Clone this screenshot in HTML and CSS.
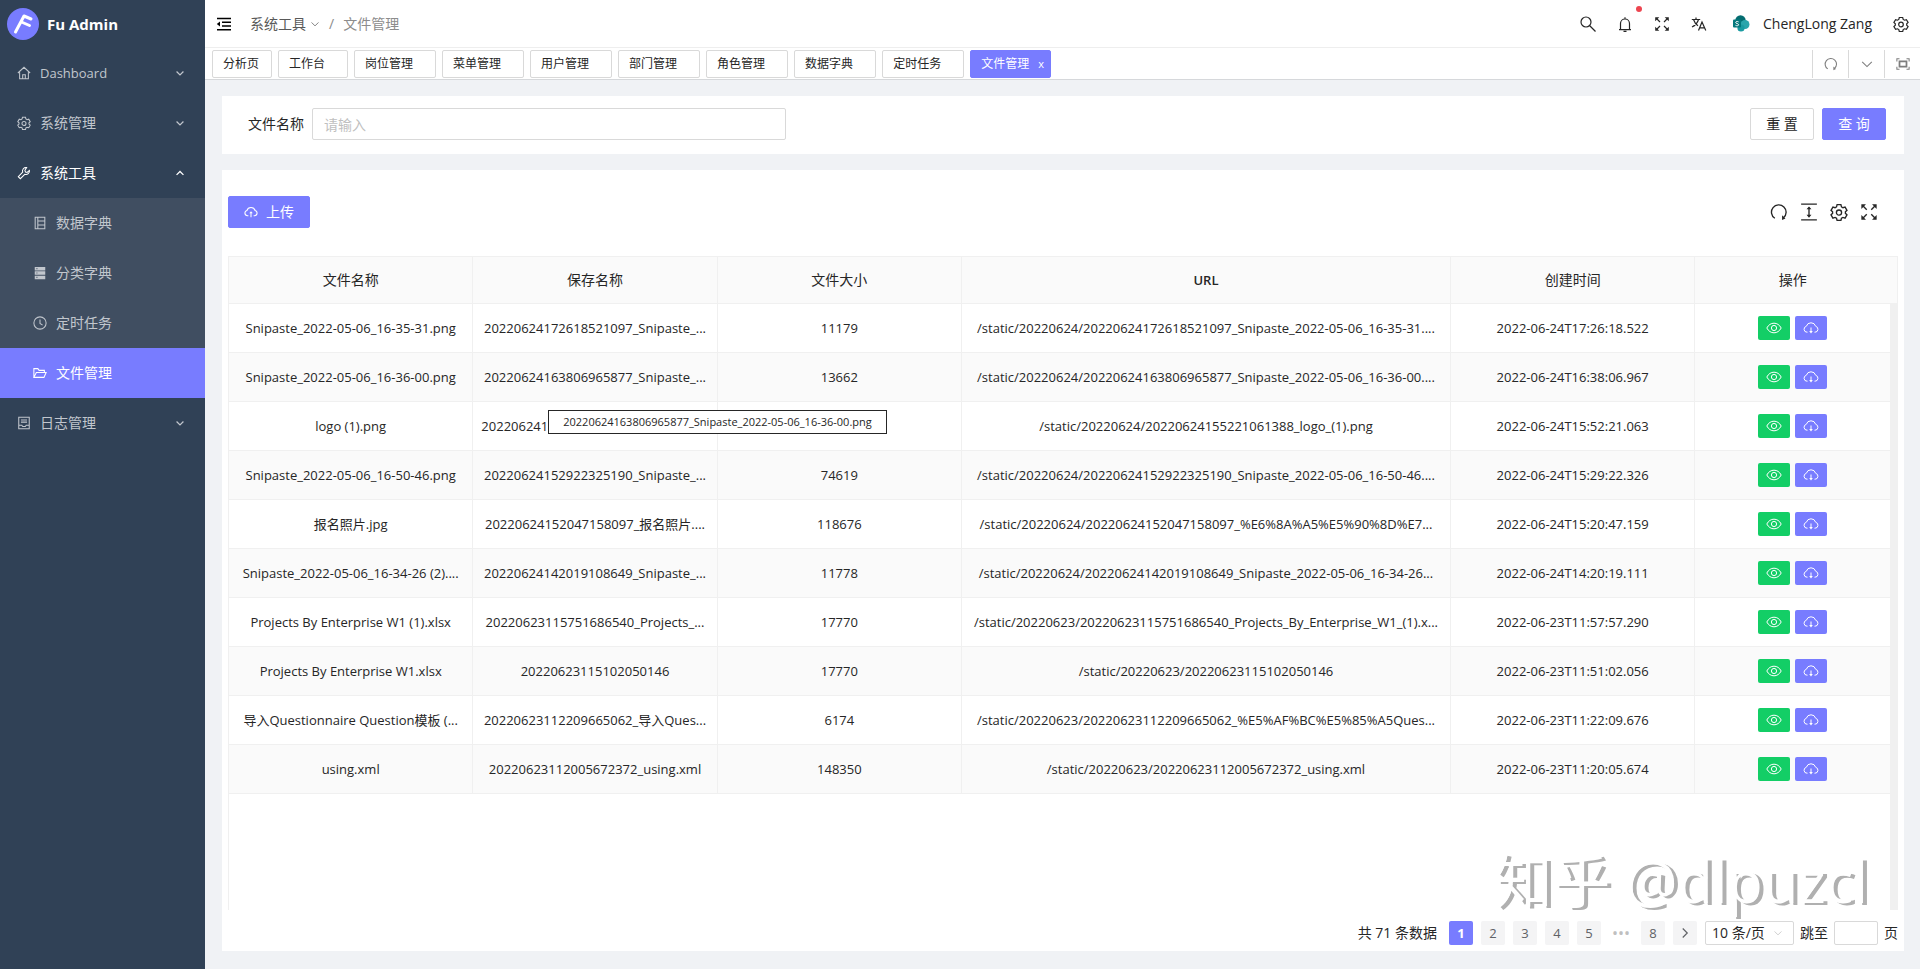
FILE: index.html
```html
<!DOCTYPE html>
<html lang="zh">
<head>
    <meta charset="UTF-8">
    <meta name="viewport" content="width=device-width, initial-scale=1.0">
    <title>文件管理 - Fu Admin</title>
    <link rel="stylesheet" href="styles.css">
</head>
<body>

    <!-- shared icons -->
    <svg class="sprite" xmlns="http://www.w3.org/2000/svg">
        <symbol id="i-down" viewBox="0 0 16 16"><path d="M2.500 5.500 8 11l5.500-5.500"/></symbol>
        <symbol id="i-up" viewBox="0 0 16 16"><path d="M2.500 11 8 5.500 13.500 11"/></symbol>
        <symbol id="i-gear" viewBox="0 0 16 16"><path d="M6.300 1.500h3.400l.5 1.900 1.300.8 1.900-.6 1.700 2.900-1.400 1.300v1.400l1.400 1.300-1.700 2.900-1.900-.6-1.300.8-.5 1.900H6.300l-.5-1.900-1.300-.8-1.900.6L.9 10.500l1.400-1.300V7.800L.9 6.500l1.700-2.900 1.900.6 1.300-.8z"/><circle cx="8" cy="8.500" r="2.300"/></symbol>
        <symbol id="i-full" viewBox="0 0 16 16"><path d="M10 6 13.500 2.500M6 6 2.500 2.500M6 10l-3.500 3.500M10 10l3.500 3.500"/><path class="solid" d="M10.700 1.200h4.100v4.100zM5.300 1.200H1.200v4.100zM1.200 10.700v4.100h4.100zM14.800 10.700v4.100h-4.100z"/></symbol>
        <symbol id="i-reload" viewBox="0 0 16 16"><path d="M4.300 13.600A6.500 6.500 0 1 1 12 13.100"/><path class="solid" d="M10.700 10.800v4.200l3-1.200z"/></symbol>
        <symbol id="i-eye" viewBox="0 0 16 16"><path d="M.8 8C2.500 4.800 5 3.200 8 3.200s5.500 1.600 7.200 4.800c-1.700 3.200-4.200 4.800-7.200 4.800S2.500 11.200.8 8z"/><circle cx="8" cy="8" r="2.600"/></symbol>
        <symbol id="i-cloud-down" viewBox="0 0 16 16"><path d="M4.500 12.200H4A3 3 0 0 1 3.300 6.300a4.900 4.900 0 0 1 9.400 0A3 3 0 0 1 12 12.200h-.5M8 7.500v4.500"/><path class="solid" d="M6.200 11h3.600L8 13.500z"/></symbol>
        <symbol id="i-cloud-up" viewBox="0 0 16 16"><path d="M5 12.200H4A3 3 0 0 1 3.300 6.300a4.900 4.900 0 0 1 9.400 0A3 3 0 0 1 12 12.200h-1M8 14V9"/><path class="solid" d="M6 9.500h4L8 7z"/></symbol>
    </svg>

    <aside class="sidebar">
        <a href="#" class="logo">
            <svg viewBox="0 0 32 32"><circle cx="16" cy="16" r="16" fill="#787cff"/><path d="M24 11 17 8 8.500 24M22.500 17.500 14.500 14" fill="none" stroke="#fff" stroke-width="3" stroke-linecap="round" stroke-linejoin="round"/></svg>
            <span>Fu Admin</span>
        </a>
        <nav>
            <a href="#" class="menu-item">
                <svg class="icon" viewBox="0 0 16 16"><path d="M1 8 8 1.500 15 8M3 7v7.500h10V7M6.500 14.500V10h3v4.500"/></svg>
                <span class="latin">Dashboard</span>
                <svg class="icon arrow"><use href="#i-down"/></svg>
            </a>
            <a href="#" class="menu-item">
                <svg class="icon"><use href="#i-gear"/></svg>
                <span>系统管理</span>
                <svg class="icon arrow"><use href="#i-down"/></svg>
            </a>
            <a href="#" class="menu-item open">
                <svg class="icon" viewBox="0 0 16 16"><path d="M11 1.800a4 4 0 0 0-4.500 5.300L1.500 12.200 3.800 14.500l5.100-5A4 4 0 0 0 14.200 5L11.500 7.300 9.700 6.800 9 4.800z"/></svg>
                <span>系统工具</span>
                <svg class="icon arrow"><use href="#i-up"/></svg>
            </a>
            <div class="submenu">
                <a href="#" class="menu-item">
                    <svg class="icon" viewBox="0 0 16 16"><path d="M2.500 1.500h11v13h-11zM5.500 1.500v13M5.500 5.800h8M5.500 10.200h8"/></svg>
                    <span>数据字典</span>
                </a>
                <a href="#" class="menu-item">
                    <svg class="icon" viewBox="0 0 16 16"><path class="solid" d="M2 1h12v4H2zM2 6h12v4H2zM2 11h12v4H2z"/><path class="dots" d="M4 3h1M4 8h1M4 13h1"/></svg>
                    <span>分类字典</span>
                </a>
                <a href="#" class="menu-item">
                    <svg class="icon" viewBox="0 0 16 16"><circle cx="8" cy="8" r="7"/><path d="M8 4v4.500l3 2"/></svg>
                    <span>定时任务</span>
                </a>
                <a href="#" class="menu-item active">
                    <svg class="icon" viewBox="0 0 16 16"><path d="M1 13V3h4.500l1.500 2h6v2.500M1 13l2.800-5.500H15L12.500 13z"/></svg>
                    <span>文件管理</span>
                </a>
            </div>
            <a href="#" class="menu-item">
                <svg class="icon" viewBox="0 0 16 16"><path d="M2 1.500h12v13H2zM4.500 4.500h7M4.500 7h7M2 10.500h3.500l1 1.500h3l1-1.500H14"/></svg>
                <span>日志管理</span>
                <svg class="icon arrow"><use href="#i-down"/></svg>
            </a>
        </nav>
    </aside>

    <div class="main">
        <header class="header">
            <svg class="icon fold" viewBox="0 0 16 16"><path d="M1 2.500h14M6 6.300h9M6 10h9M1 13.700h14"/><path class="solid" d="M4 5.500v5L.8 8z"/></svg>
            <div class="breadcrumb">
                <a href="#">系统工具 <svg class="icon"><use href="#i-down"/></svg></a>
                <span>/</span>
                <span>文件管理</span>
            </div>
            <div class="tools">
                <svg class="icon" viewBox="0 0 16 16"><circle cx="6" cy="6" r="5"/><path d="m9.500 9.500 6 6"/></svg>
                <span class="bell">
                    <svg class="icon" viewBox="0 0 16 16"><path d="M2 13.700h12M3.500 13.500V7.500a4.500 4.500 0 0 1 9 0v6M8 3V1.200M6.500 15.300h3"/></svg>
                </span>
                <svg class="icon"><use href="#i-full"/></svg>
                <svg class="icon" viewBox="0 0 16 16"><path d="M.8 3.500h8.400M5 1.500v2M7.500 3.500C6.500 7 4 9.500 1 11M2.500 3.500C3.500 6.500 5 8.500 7 9.800M7.500 14.500l3.500-8.500 3.800 8.500M8.800 11.800h4.500"/></svg>
                <svg class="avatar" viewBox="0 0 18 18"><circle cx="8.500" cy="5.500" r="5.200" fill="#036c70"/><circle cx="13" cy="9.500" r="4.500" fill="#2aa5ab"/><circle cx="9" cy="13" r="3.600" fill="#1a9ba1"/><rect x="1" y="4.500" width="8" height="8" rx="1" fill="#03787c"/><path d="M6.600 6.900C5.500 6.200 3.700 6.400 3.700 7.500c0 1.300 2.900.8 2.900 2.200 0 1.200-2 1.300-3.100.6" fill="none" stroke="#fff"/></svg>
                <span class="user">ChengLong Zang</span>
                <svg class="icon"><use href="#i-gear"/></svg>
            </div>
        </header>

        <div class="tabs">
            <a href="#" class="tab fixed">分析页</a>
            <a href="#" class="tab">工作台</a>
            <a href="#" class="tab">岗位管理</a>
            <a href="#" class="tab">菜单管理</a>
            <a href="#" class="tab">用户管理</a>
            <a href="#" class="tab">部门管理</a>
            <a href="#" class="tab">角色管理</a>
            <a href="#" class="tab">数据字典</a>
            <a href="#" class="tab">定时任务</a>
            <a href="#" class="tab active">文件管理<span class="close">x</span></a>
            <div class="tab-tools">
                <button type="button" aria-label="刷新"><svg class="icon"><use href="#i-reload"/></svg></button>
                <button type="button" aria-label="更多"><svg class="icon"><use href="#i-down"/></svg></button>
                <button type="button" aria-label="全屏"><svg class="icon" viewBox="0 0 16 16"><path d="M1 5V2h3M12 2h3v3M15 11v3h-3M4 14H1v-3"/><path class="bold" d="M4 5h8v6H4z"/></svg></button>
            </div>
        </div>

        <main class="content">
            <form class="card search">
                <label for="fileName">文件名称</label>
                <input type="text" id="fileName" placeholder="请输入">
                <button type="reset" class="btn">重 置</button>
                <button type="button" class="btn primary">查 询</button>
            </form>

            <section class="card list">
                <div class="toolbar">
                    <button type="button" class="btn primary upload"><svg class="icon"><use href="#i-cloud-up"/></svg>上传</button>
                    <div class="toolbar-icons">
                        <svg class="icon"><use href="#i-reload"/></svg>
                        <svg class="icon" viewBox="0 0 16 16"><path d="M1 1h14M1 15h14M8 4v8"/><path class="solid" d="M5.800 5.500h4.400L8 3zM5.800 10.500h4.400L8 13z"/></svg>
                        <svg class="icon"><use href="#i-gear"/></svg>
                        <svg class="icon"><use href="#i-full"/></svg>
                    </div>
                </div>

                <div class="table-wrap">
                    <table>
                        <colgroup>
                            <col class="c-name"><col class="c-name"><col class="c-name"><col class="c-url"><col class="c-name"><col><col class="c-bar">
                        </colgroup>
                        <thead>
                            <tr>
                                <th>文件名称</th>
                                <th>保存名称</th>
                                <th>文件大小</th>
                                <th class="latin">URL</th>
                                <th>创建时间</th>
                                <th class="actions">操作</th>
                                <td class="bar-head"></td>
                            </tr>
                        </thead>
                        <tbody id="rows"></tbody>
                    </table>
                    <div class="table-rest"></div>
                    <div class="tooltip" role="tooltip">20220624163806965877_Snipaste_2022-05-06_16-36-00.png</div>
                </div>

                <div class="pagination">
                    <span class="total">共 71 条数据</span>
                    <button type="button" class="page active">1</button>
                    <button type="button" class="page">2</button>
                    <button type="button" class="page">3</button>
                    <button type="button" class="page">4</button>
                    <button type="button" class="page">5</button>
                    <span class="more">•••</span>
                    <button type="button" class="page">8</button>
                    <button type="button" class="page" aria-label="下一页"><svg class="icon" viewBox="0 0 16 16"><path d="m5 2 6 6-6 6"/></svg></button>
                    <div class="page-end">
                        <div class="size">
                            <select aria-label="每页条数"><option>10 条/页</option></select>
                            <svg class="icon"><use href="#i-down"/></svg>
                        </div>
                        <label for="jump">跳至</label>
                        <input type="text" id="jump">
                        <span>页</span>
                    </div>
                </div>

                <div class="watermark">知乎 @dlpuzcl</div>
            </section>
        </main>
    </div>

    <script>
        const files = [
            ["Snipaste_2022-05-06_16-35-31.png", "20220624172618521097_Snipaste_...", "11179", "/static/20220624/20220624172618521097_Snipaste_2022-05-06_16-35-31....", "2022-06-24T17:26:18.522"],
            ["Snipaste_2022-05-06_16-36-00.png", "20220624163806965877_Snipaste_...", "13662", "/static/20220624/20220624163806965877_Snipaste_2022-05-06_16-36-00....", "2022-06-24T16:38:06.967"],
            ["logo (1).png", "20220624155221061388_logo_(1).png", "17770", "/static/20220624/20220624155221061388_logo_(1).png", "2022-06-24T15:52:21.063"],
            ["Snipaste_2022-05-06_16-50-46.png", "20220624152922325190_Snipaste_...", "74619", "/static/20220624/20220624152922325190_Snipaste_2022-05-06_16-50-46....", "2022-06-24T15:29:22.326"],
            ["报名照片.jpg", "20220624152047158097_报名照片....", "118676", "/static/20220624/20220624152047158097_%E6%8A%A5%E5%90%8D%E7...", "2022-06-24T15:20:47.159"],
            ["Snipaste_2022-05-06_16-34-26 (2)....", "20220624142019108649_Snipaste_...", "11778", "/static/20220624/20220624142019108649_Snipaste_2022-05-06_16-34-26...", "2022-06-24T14:20:19.111"],
            ["Projects By Enterprise W1 (1).xlsx", "20220623115751686540_Projects_...", "17770", "/static/20220623/20220623115751686540_Projects_By_Enterprise_W1_(1).x...", "2022-06-23T11:57:57.290"],
            ["Projects By Enterprise W1.xlsx", "20220623115102050146", "17770", "/static/20220623/20220623115102050146", "2022-06-23T11:51:02.056"],
            ["导入Questionnaire Question模板 (...", "20220623112209665062_导入Ques...", "6174", "/static/20220623/20220623112209665062_%E5%AF%BC%E5%85%A5Ques...", "2022-06-23T11:22:09.676"],
            ["using.xml", "20220623112005672372_using.xml", "148350", "/static/20220623/20220623112005672372_using.xml", "2022-06-23T11:20:05.674"]
        ];

        const rows = document.getElementById("rows");
        files.forEach(function (file) {
            const cells = file.map(function (text) { return `<td>${text}</td>`; }).join("");
            rows.innerHTML += `<tr>${cells}
                <td class="actions">
                    <button type="button" class="act view" aria-label="预览"><svg class="icon"><use href="#i-eye"/></svg></button>
                    <button type="button" class="act down" aria-label="下载"><svg class="icon"><use href="#i-cloud-down"/></svg></button>
                </td>
                <td class="bar"></td></tr>`;
        });
    </script>
</body>
</html>
```

FILE: styles.css
```css
* {
    box-sizing: border-box;
}
body {
    display: flex;
    min-height: 100vh;
    margin: 0;
    background: #f0f2f5;
    color: #262626;
    font-family: "Open Sans", "Noto Sans CJK SC", sans-serif;
    font-size: 14px;
    line-height: 22px;
}
a {
    color: inherit;
    text-decoration: none;
}
button, input, select {
    margin: 0;
    font: inherit;
    color: inherit;
}
button {
    cursor: pointer;
}
.sprite {
    display: none;
}
.icon {
    width: 14px;
    height: 14px;
    flex: none;
    fill: none;
    stroke: currentColor;
    stroke-width: 1.2;
}
.solid {
    fill: currentColor;
    stroke: none;
}
.latin {
    font-size: 13px;
}

/* sidebar */
.sidebar {
    width: 205px;
    flex: none;
    background: #304156;
    color: #c1c6cd;
}
.logo {
    display: flex;
    align-items: center;
    gap: 8px;
    height: 48px;
    padding-left: 7px;
    color: #fff;
    font-size: 15px;
    font-weight: 700;
}
.logo svg {
    width: 32px;
    height: 32px;
}
.menu-item {
    display: flex;
    align-items: center;
    height: 50px;
    padding: 0 20px 1px 17px;
    gap: 9px;
}
.menu-item .arrow {
    width: 10px;
    height: 10px;
    margin-left: auto;
    stroke-width: 2;
}
.menu-item.open {
    color: #fff;
}
.submenu {
    background: #404e61;
}
.submenu .menu-item {
    padding-left: 33px;
}
.submenu .active {
    background: #787cff;
    color: #fff;
}
.dots {
    stroke: #404e61;
}

/* header */
.main {
    display: flex;
    flex: 1;
    flex-direction: column;
    min-width: 0;
}
.header {
    display: flex;
    align-items: center;
    height: 48px;
    padding: 0 11px;
    background: #fff;
    border-bottom: 1px solid #eee;
}
.fold {
    width: 16px;
    height: 16px;
    margin-right: 18px;
    color: #000;
    stroke-width: 1.5;
}
.breadcrumb {
    display: flex;
    gap: 9px;
    color: #8c8c8c;
}
.breadcrumb a {
    display: flex;
    align-items: center;
    gap: 4px;
    color: #595959;
}
.breadcrumb .icon {
    width: 10px;
    height: 10px;
}
.tools {
    display: flex;
    align-items: center;
    gap: 21px;
    margin-left: auto;
}
.tools .icon {
    width: 16px;
    height: 16px;
}
.bell {
    position: relative;
    display: flex;
}
.bell::after {
    content: "";
    position: absolute;
    top: -10px;
    right: -9px;
    width: 6px;
    height: 6px;
    border-radius: 50%;
    background: #ed4550;
}
.avatar {
    width: 18px;
    height: 18px;
    margin-left: 4px;
}
.user {
    margin-left: -8px;
}

/* tabs */
.tabs {
    display: flex;
    gap: 6px;
    height: 32px;
    padding: 2px 0 0 7px;
    background: #fff;
    border-bottom: 1px solid #d6d8db;
    font-size: 12px;
}
.tab {
    height: 28px;
    padding: 0 22px 0 10px;
    border: 1px solid #d9d9d9;
    border-radius: 2px;
    line-height: 26px;
}
.tab.fixed {
    padding-right: 12px;
}
.tab.active {
    display: flex;
    padding-right: 6px;
    border-color: #787cff;
    background: #787cff;
    color: #fff;
}
.close {
    margin-left: 9px;
    font-size: 11px;
}
.tab-tools {
    display: flex;
    height: 28px;
    margin-left: auto;
}
.tab-tools button {
    display: flex;
    align-items: center;
    justify-content: center;
    width: 36px;
    padding: 0;
    border: 0;
    border-left: 1px solid #d9d9d9;
    background: none;
    color: #7d7d7d;
}
.bold {
    stroke-width: 2;
}

/* content */
.content {
    display: flex;
    flex: 1;
    flex-direction: column;
    gap: 16px;
    padding: 16px 16px 18px 17px;
}
.card {
    background: #fff;
}
.btn {
    width: 64px;
    height: 32px;
    padding: 0;
    border: 1px solid #d9d9d9;
    border-radius: 2px;
    background: #fff;
}
.btn.primary {
    border-color: #787cff;
    background: #787cff;
    color: #fff;
}
.search {
    display: flex;
    align-items: center;
    gap: 8px;
    height: 58px;
    padding: 0 18px 2px 26px;
}
.search input {
    width: 474px;
    height: 32px;
    margin-right: auto;
    padding: 4px 11px;
    border: 1px solid #d9d9d9;
    border-radius: 2px;
}
.search input::placeholder {
    color: #bfbfbf;
}
.list {
    position: relative;
    display: flex;
    flex: 1;
    flex-direction: column;
    padding: 26px 6px 6px;
}
.toolbar {
    display: flex;
    align-items: center;
    justify-content: space-between;
    margin-bottom: 28px;
    padding-right: 20px;
}
.upload {
    display: flex;
    align-items: center;
    justify-content: center;
    gap: 8px;
    width: 82px;
}
.toolbar-icons {
    display: flex;
    gap: 12px;
}
.toolbar-icons .icon {
    width: 18px;
    height: 18px;
}

/* table */
.table-wrap {
    position: relative;
    display: flex;
    flex: 1;
    flex-direction: column;
}
table {
    width: 100%;
    table-layout: fixed;
    border-collapse: separate;
    border-spacing: 0;
    border-top: 1px solid #f0f0f0;
    border-left: 1px solid #f0f0f0;
    font-size: 13px;
}
.c-name {
    width: 14.64%;
}
.c-url {
    width: 29.3%;
}
.c-bar {
    width: 8px;
}
th, td {
    padding: 0 8px 1px;
    border-right: 1px solid #f0f0f0;
    border-bottom: 1px solid #f0f0f0;
    text-align: center;
    white-space: nowrap;
    overflow: hidden;
}
th {
    height: 47px;
    background: #fafafa;
    font-size: 14px;
    font-weight: 400;
}
th.latin {
    font-size: 13px;
    font-weight: 600;
}
td {
    height: 49px;
}
tbody tr:nth-child(even) td {
    background: #fafafa;
}
th.actions, td.actions {
    border-right: 0;
}
.bar-head {
    height: 47px;
    padding: 0;
    background: #fafafa;
}
tbody tr .bar, tbody tr:nth-child(even) .bar {
    padding: 0;
    border-right: 0;
    border-color: #f0f0f0;
    background: #f0f0f0;
}
.table-rest {
    flex: 1;
    border-left: 1px solid #f0f0f0;
    border-right: 8px solid #f0f0f0;
}
.act {
    display: inline-flex;
    align-items: center;
    justify-content: center;
    width: 32px;
    height: 24px;
    padding: 0;
    border: 0;
    border-radius: 2px;
    color: #fff;
    vertical-align: middle;
}
.act .icon {
    width: 16px;
    height: 16px;
    stroke-width: 1;
}
.act.view {
    background: #13ce66;
}
.act.down {
    margin-left: 1px;
    background: #787cff;
}
.tooltip {
    position: absolute;
    top: 154px;
    left: 320px;
    min-width: 339px;
    padding: 0 7px;
    border: 1px solid #262626;
    background: #fff;
    font-size: 11px;
    text-align: center;
}

/* pagination */
.pagination {
    display: flex;
    align-items: center;
    justify-content: flex-end;
    gap: 8px;
    margin-top: 11px;
    height: 24px;
}
.total {
    margin-right: 4px;
}
.page {
    display: flex;
    align-items: center;
    justify-content: center;
    width: 24px;
    height: 24px;
    padding: 0;
    border: 0;
    border-radius: 2px;
    background: #f4f4f5;
    color: #606266;
    font-size: 13px;
}
.page.active {
    background: #787cff;
    color: #fff;
    font-weight: 700;
}
.page .icon {
    width: 12px;
    height: 12px;
    stroke-width: 1.6;
}
.more {
    width: 24px;
    color: #bfbfbf;
    font-size: 16px;
    text-align: center;
}
.page-end {
    display: flex;
    align-items: center;
    gap: 6px;
}
.size {
    position: relative;
}
.size select {
    width: 89px;
    height: 24px;
    padding: 0 6px;
    border: 1px solid #d9d9d9;
    border-radius: 2px;
    background: #fff;
    appearance: none;
}
.size .icon {
    position: absolute;
    top: 7px;
    right: 11px;
    width: 10px;
    height: 10px;
    color: #bfbfbf;
}
#jump {
    width: 44px;
    height: 24px;
    padding: 0 6px;
    border: 1px solid #d9d9d9;
    border-radius: 2px;
}
.watermark {
    position: absolute;
    right: 36px;
    bottom: 38px;
    color: #fff;
    font-size: 58px;
    line-height: 64px;
    text-shadow: 4px 2px 0 #b0b0b0;
    pointer-events: none;
}
```
